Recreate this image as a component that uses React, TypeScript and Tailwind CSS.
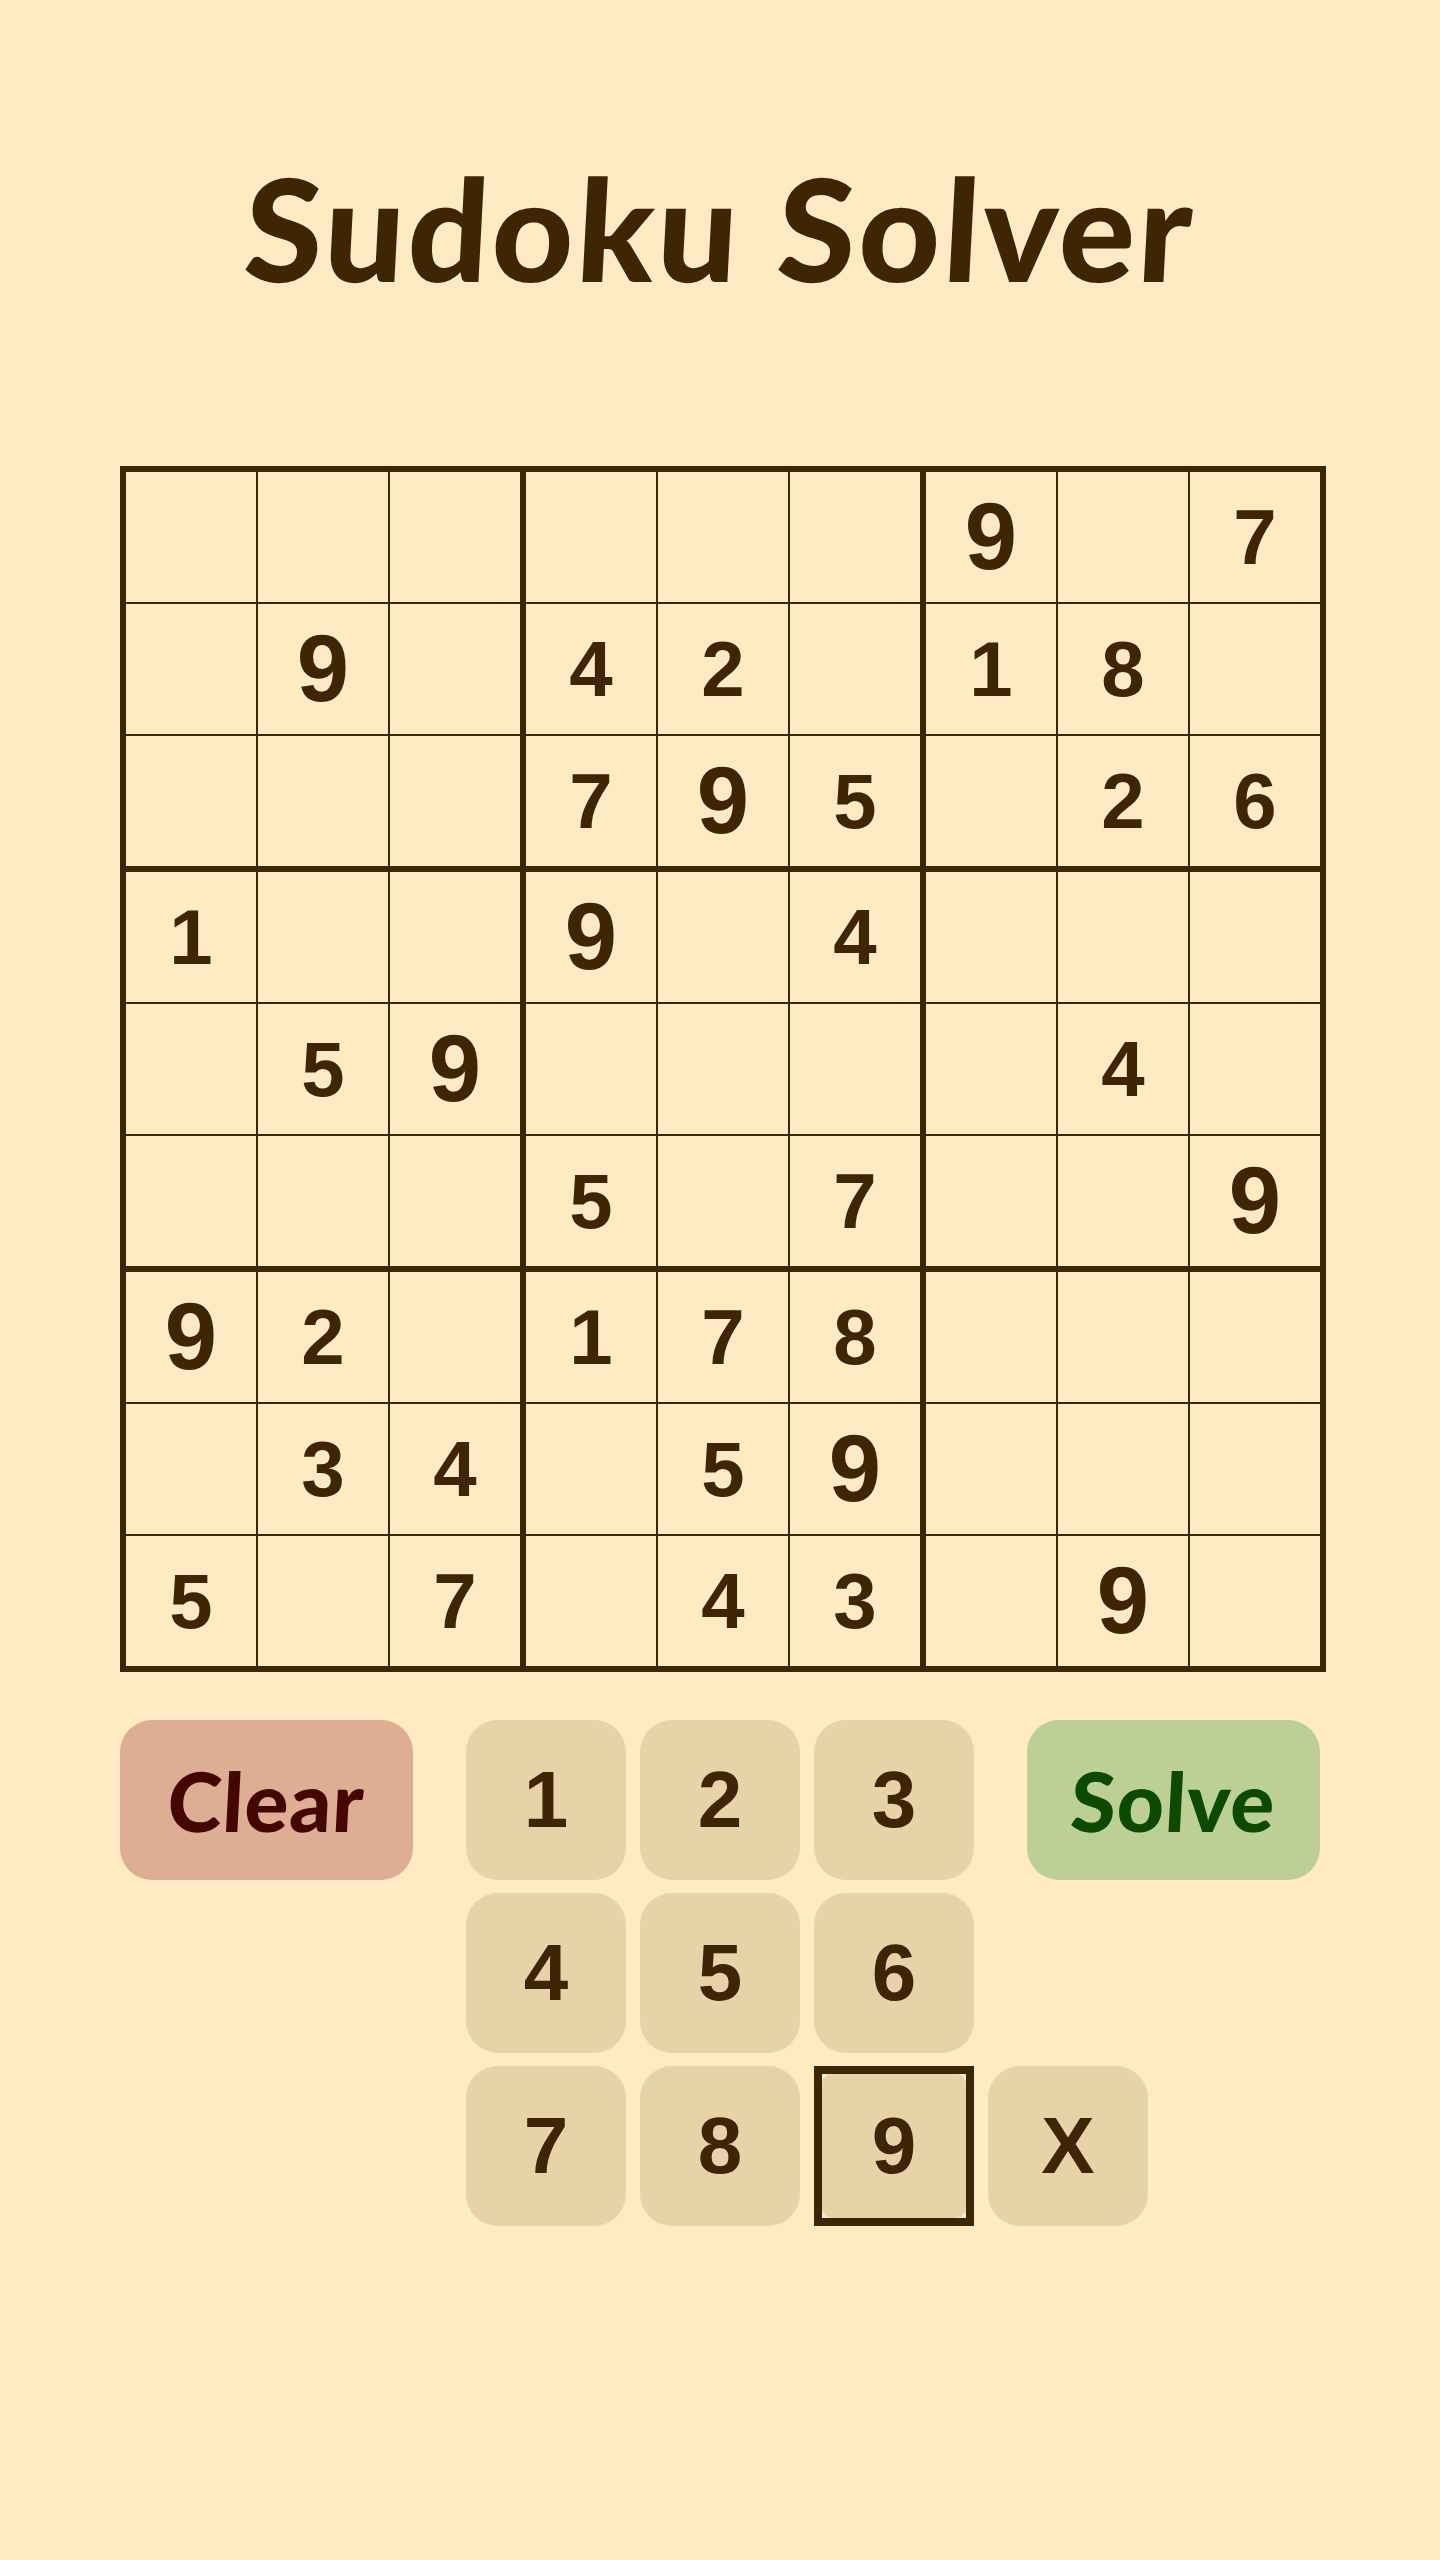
import React from "react";

const board = [
  "000000907",
  "090420180",
  "000795026",
  "100904000",
  "059000040",
  "000507009",
  "920178000",
  "034059000",
  "507043090",
];

const selected = "9";

function NumButton({ label, active }: { label: string; active?: boolean }) {
  if (active) {
    return (
      <div className="w-[160px] h-[160px] shrink-0 border-[8px] border-[#3d2508]">
        <div className="w-full h-full rounded-[10px] bg-[#e8d2a8] flex items-center justify-center text-[80px] font-bold leading-none">
          {label}
        </div>
      </div>
    );
  }
  return (
    <div className="w-[160px] h-[160px] shrink-0 rounded-[32px] bg-[#e8d2a8] flex items-center justify-center text-[80px] font-bold leading-none">
      {label}
    </div>
  );
}

export default function App() {
  return (
    <div className="min-h-[2560px] w-full bg-[#ffeac4] text-[#3d2506] font-['Liberation_Sans',Arial,sans-serif]">
      <div className="mx-auto w-[1200px] pt-[156px]">
        <h1 className="text-center font-['Lato','Open_Sans',sans-serif] font-black text-[142px] tracking-[3px] leading-none -skew-x-3">
          Sudoku Solver
        </h1>

        <div className="mt-[168px] w-[1206px] border-l-[6px] border-t-[6px] border-[#3d2508] flex flex-col">
          {board.map((row, r) => (
            <div key={r} className="flex">
              {row.split("").map((v, c) => {
                const thickR = c % 3 === 2;
                const thickB = r % 3 === 2;
                const isSel = v === selected;
                return (
                  <div
                    key={c}
                    className={
                      "flex items-center justify-center font-bold leading-none border-[#3d2508] " +
                      (thickR ? "w-[136px] border-r-[6px] " : "w-[132px] border-r-2 ") +
                      (thickB ? "h-[136px] border-b-[6px] " : "h-[132px] border-b-2 ") +
                      (isSel ? "text-[94px]" : "text-[78px]")
                    }
                  >
                    {v !== "0" ? v : ""}
                  </div>
                );
              })}
            </div>
          ))}
        </div>

        <div className="mt-[48px] flex items-start">
          <div className="w-[293px] h-[160px] shrink-0 rounded-[32px] bg-[#deae94] flex items-center justify-center">
            <span className="font-['Lato','Open_Sans',sans-serif] font-black text-[82px] tracking-[1px] leading-none text-[#460600] -skew-x-3">
              Clear
            </span>
          </div>

          <div className="ml-[53px] w-[508px] shrink-0 flex flex-col gap-[13px]">
            <div className="flex gap-[14px]">
              <NumButton label="1" />
              <NumButton label="2" />
              <NumButton label="3" />
            </div>
            <div className="flex gap-[14px]">
              <NumButton label="4" />
              <NumButton label="5" />
              <NumButton label="6" />
            </div>
            <div className="flex gap-[14px]">
              <NumButton label="7" />
              <NumButton label="8" />
              <NumButton label="9" active />
              <NumButton label="X" />
            </div>
          </div>

          <div className="ml-[53px] w-[293px] h-[160px] shrink-0 rounded-[32px] bg-[#bcd095] flex items-center justify-center">
            <span className="font-['Lato','Open_Sans',sans-serif] font-black text-[82px] tracking-[1px] leading-none text-[#0c4a02] -skew-x-3">
              Solve
            </span>
          </div>
        </div>
      </div>
    </div>
  );
}
